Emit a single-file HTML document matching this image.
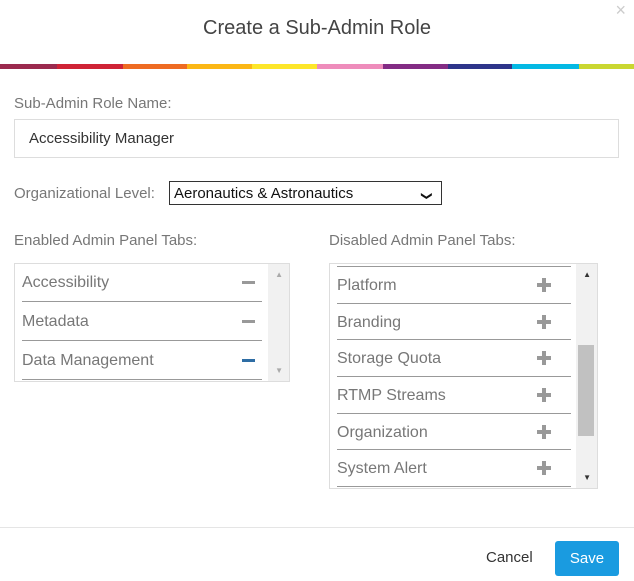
<!DOCTYPE html>
<html><head><style>
body{margin:0;width:634px;height:581px;background:#fff;font-family:"Liberation Sans",sans-serif;position:relative;overflow:hidden;color:#666}
.a{position:absolute}
.title{left:0;width:634px;top:17px;text-align:center;font-size:20px;color:#444}
.bar{top:64px;height:5px;left:0;width:634px;display:flex}
.bar div{height:5px}
.lbl{font-size:15px;color:#777}
.row{position:absolute;left:7px;height:37px;border-bottom:1px solid #999;font-size:16px;color:#777;line-height:37px}
.minus{position:absolute;width:13px;height:3px;background:#999;top:17px}
.plus{position:absolute;width:14px;height:14px;top:11px}
.plus:before{content:"";position:absolute;left:0;top:5px;width:14px;height:4px;background:#999}
.plus:after{content:"";position:absolute;left:5px;top:0;width:4px;height:14px;background:#999}
</style></head><body>
<div class="a title">Create a Sub-Admin Role</div>
<div class="a" style="right:8px;top:0;font-size:18px;color:#ccc">×</div>
<div class="a bar">
<div style="width:57px;background:#9b2a4e"></div><div style="width:66px;background:#cf2336"></div><div style="width:64px;background:#ee6b22"></div><div style="width:65px;background:#fbb715"></div><div style="width:65px;background:#fde62a"></div><div style="width:66px;background:#ee8cbb"></div><div style="width:65px;background:#832c84"></div><div style="width:64px;background:#2e358a"></div><div style="width:67px;background:#04b9e4"></div><div style="width:55px;background:#cad731"></div>
</div>
<div class="a lbl" style="left:14px;top:95px">Sub-Admin Role Name:</div>
<div class="a" style="left:14px;top:119px;width:603px;height:37px;border:1px solid #ddd;font-size:15px;color:#333;line-height:37px;text-indent:14px">Accessibility Manager</div>
<div class="a lbl" style="left:14px;top:185px;font-size:15px">Organizational Level:</div>
<div class="a" style="left:169px;top:181px;width:271px;height:22px;border:1px solid #333;font-size:15px;color:#111;line-height:24px;text-indent:4px">Aeronautics &amp; Astronautics<span style="position:absolute;right:8px;top:0;font-size:11px;transform:rotate(90deg)">&#10095;</span></div>
<div class="a lbl" style="left:14px;top:232px">Enabled Admin Panel Tabs:</div>
<div class="a lbl" style="left:329px;top:232px">Disabled Admin Panel Tabs:</div>

<div class="a" style="left:14px;top:263px;width:274px;height:117px;border:1px solid #ddd;overflow:hidden">
<div class="a" style="right:0;top:0;width:21px;height:117px;background:#f1f1f1"></div>
<div class="a" style="right:6px;top:6px;font-size:8px;color:#aaa">▲</div>
<div class="a" style="right:6px;bottom:6px;font-size:8px;color:#aaa">▼</div>
<div class="row" style="top:0;width:240px">Accessibility<div class="minus" style="right:7px"></div></div>
<div class="row" style="top:39px;width:240px">Metadata<div class="minus" style="right:7px"></div></div>
<div class="row" style="top:78px;width:240px">Data Management<div class="minus" style="right:7px;background:#2e6da4"></div></div>
</div>

<div class="a" style="left:329px;top:263px;width:267px;height:224px;border:1px solid #ddd;overflow:hidden">
<div class="a" style="right:0;top:0;width:21px;height:224px;background:#f1f1f1"></div>
<div class="a" style="right:3px;top:81px;width:16px;height:91px;background:#c1c1c1"></div>
<div class="a" style="right:6px;top:6px;font-size:8px;color:#333">▲</div>
<div class="a" style="right:6px;bottom:6px;font-size:8px;color:#333">▼</div>
<div class="a" style="left:7px;top:2px;width:234px;border-top:1px solid #999"></div>
<div class="row" style="top:3px;width:234px;height:36px;line-height:38px">Platform<div class="plus" style="right:20px"></div></div>
<div class="row" style="top:40px;width:234px;height:35px;line-height:37px">Branding<div class="plus" style="right:20px"></div></div>
<div class="row" style="top:76px;width:234px;height:36px;line-height:38px">Storage Quota<div class="plus" style="right:20px"></div></div>
<div class="row" style="top:113px;width:234px;height:36px;line-height:38px">RTMP Streams<div class="plus" style="right:20px"></div></div>
<div class="row" style="top:150px;width:234px;height:35px;line-height:37px">Organization<div class="plus" style="right:20px"></div></div>
<div class="row" style="top:186px;width:234px;height:36px;line-height:38px">System Alert<div class="plus" style="right:20px"></div></div>
</div>

<div class="a" style="left:0;top:527px;width:634px;border-top:1px solid #e5e5e5"></div>
<div class="a" style="left:486px;top:549px;font-size:15px;color:#333">Cancel</div>
<div class="a" style="left:555px;top:541px;width:64px;height:35px;background:#1a9be0;border-radius:3px;color:#fff;font-size:15px;line-height:35px;text-align:center">Save</div>
</body></html>
